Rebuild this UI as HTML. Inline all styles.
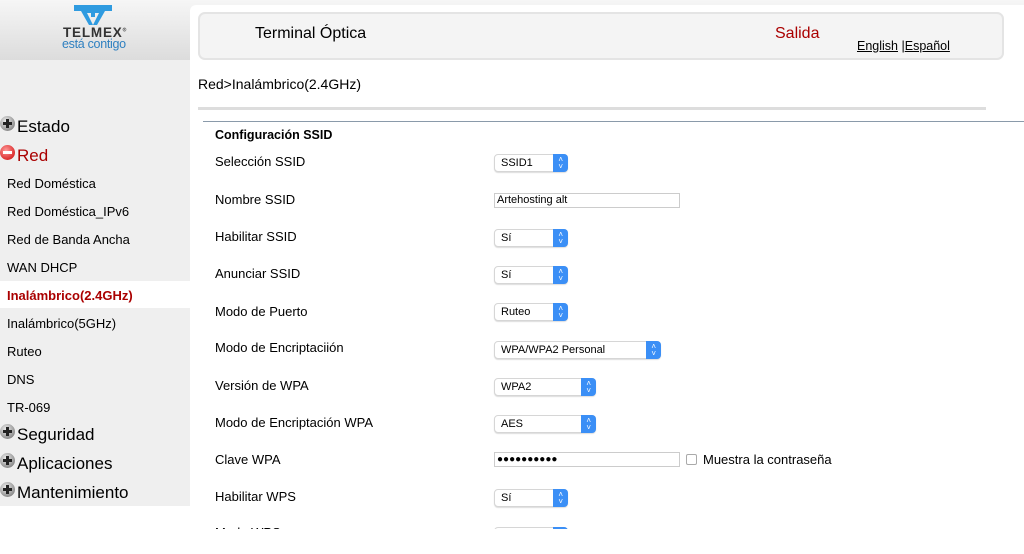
<!DOCTYPE html>
<html><head><meta charset="utf-8"><style>
*{margin:0;padding:0;box-sizing:border-box}
body{width:1024px;height:554px;overflow:hidden;background:#fff;font-family:"Liberation Sans",Arial,sans-serif;position:relative;color:#000}
.abs{position:absolute}
#top{left:0;top:0;width:1024px;height:60px;background:linear-gradient(#f6f6f6,#dcdcdc)}
#side{left:0;top:60px;width:192px;height:446px;background:#efefef}
#panel{left:190px;top:5px;width:834px;height:530px;background:#fff;border-radius:6px 0 0 0}
#hdr{left:198px;top:12px;width:806px;height:48px;background:#f4f4f4;border:2px solid #e4e4e4;border-radius:7px}
.m{font-size:17px;left:17px}
.ic{position:absolute;left:0;width:15px;height:15px;border-radius:50%;background:radial-gradient(circle at 40% 35%,#eee,#666);}
.ic.r{background:radial-gradient(circle at 40% 35%,#f99,#c00)}
.ic b{position:absolute;left:3px;top:6px;width:9px;height:3px;background:#222}
.ic i{position:absolute;left:6px;top:3px;width:3px;height:9px;background:#222}
.ic.r b{background:#fff}
.s{font-size:13px;left:7px}
.l{font-size:13px;left:215px}
.sel{position:absolute;left:494px;height:18px;border:1px solid #d6d6d6;border-radius:4px;background:#fff;font-size:11px;padding:2px 0 0 6px;box-shadow:0 1px 1px #ddd}
.sel:after{content:"";position:absolute;right:-1px;top:-1px;width:15px;height:18px;background:#3b8ff6;border-radius:0 4px 4px 0}
.sel span{position:absolute;right:4px;top:1px;color:#fff;font-size:8px;line-height:7px;z-index:2}
.inp{position:absolute;left:494px;width:186px;height:15px;border:1px solid #ccc;font-size:11px;padding:0 2px;line-height:13px}
</style></head><body>
<div id="top" class="abs"></div>
<div id="side" class="abs"></div>
<div id="panel" class="abs"></div>
<div id="hdr" class="abs"></div>
<svg class="abs" style="left:74px;top:5px" width="38" height="21" viewBox="0 0 38 21"><polygon points="0,0 38,0 38,6 31,6 23,20 19,20 25,8 21,8 21,12 17,12 17,8 13,8 19,20 15,20 7,6 0,6" fill="#2f9be0"/></svg>
<div class="abs" style="left:63px;top:25px;font-size:13.5px;font-weight:bold;color:#333;letter-spacing:0.8px">TELMEX<sup style="font-size:5px">®</sup></div>
<div class="abs" style="left:62px;top:37px;font-size:12.5px;color:#2f80c0;letter-spacing:-0.3px">está contigo</div>
<div class="abs" style="left:255px;top:25px;font-size:16px">Terminal Óptica</div>
<div class="abs" style="left:775px;top:25px;font-size:16px;color:#a00">Salida</div>
<div class="abs" style="left:857px;top:39px;font-size:12.5px"><u>English</u> |<u>Español</u></div>
<div class="abs" style="left:198px;top:76px;font-size:14px">Red&gt;Inalámbrico(2.4GHz)</div>
<div class="abs" style="left:198px;top:107px;width:788px;height:3px;background:#ddd"></div>
<div class="abs" style="left:203px;top:121px;width:821px;height:1px;background:#8a9aaa"></div>
<div class="abs" style="left:215px;top:128px;font-size:12.5px;font-weight:bold">Configuración SSID</div>

<div class="abs" style="left:0;top:116px;width:192px;height:20px"><div class="ic"><b></b><i></i></div><div class="abs m" style="top:1px">Estado</div></div>
<div class="abs" style="left:0;top:145px;width:192px;height:20px"><div class="ic r"><b></b></div><div class="abs m" style="top:1px;color:#a00">Red</div></div>
<div class="abs s" style="top:176px">Red Doméstica</div>
<div class="abs s" style="top:204px">Red Doméstica_IPv6</div>
<div class="abs s" style="top:232px">Red de Banda Ancha</div>
<div class="abs s" style="top:260px">WAN DHCP</div>
<div class="abs" style="left:0;top:281px;width:192px;height:27px;background:#fff"></div>
<div class="abs s" style="top:288px;color:#a00;font-weight:bold">Inalámbrico(2.4GHz)</div>
<div class="abs s" style="top:316px">Inalámbrico(5GHz)</div>
<div class="abs s" style="top:344px">Ruteo</div>
<div class="abs s" style="top:372px">DNS</div>
<div class="abs s" style="top:400px">TR-069</div>
<div class="abs" style="left:0;top:424px;width:192px;height:20px"><div class="ic"><b></b><i></i></div><div class="abs m" style="top:1px">Seguridad</div></div>
<div class="abs" style="left:0;top:453px;width:192px;height:20px"><div class="ic"><b></b><i></i></div><div class="abs m" style="top:1px">Aplicaciones</div></div>
<div class="abs" style="left:0;top:482px;width:192px;height:20px"><div class="ic"><b></b><i></i></div><div class="abs m" style="top:1px">Mantenimiento</div></div>

<div class="abs l" style="top:154px">Selección SSID</div>
<div class="sel" style="top:154px;width:74px">SSID1<span>˄<br>˅</span></div>
<div class="abs l" style="top:192px">Nombre SSID</div>
<div class="inp" style="top:193px">Artehosting alt</div>
<div class="abs l" style="top:229px">Habilitar SSID</div>
<div class="sel" style="top:229px;width:74px">Sí<span>˄<br>˅</span></div>
<div class="abs l" style="top:266px">Anunciar SSID</div>
<div class="sel" style="top:266px;width:74px">Sí<span>˄<br>˅</span></div>
<div class="abs l" style="top:304px">Modo de Puerto</div>
<div class="sel" style="top:303px;width:74px">Ruteo<span>˄<br>˅</span></div>
<div class="abs l" style="top:340px">Modo de Encriptaciión</div>
<div class="sel" style="top:341px;width:167px">WPA/WPA2 Personal<span>˄<br>˅</span></div>
<div class="abs l" style="top:378px">Versión de WPA</div>
<div class="sel" style="top:378px;width:102px">WPA2<span>˄<br>˅</span></div>
<div class="abs l" style="top:415px">Modo de Encriptación WPA</div>
<div class="sel" style="top:415px;width:102px">AES<span>˄<br>˅</span></div>
<div class="abs l" style="top:452px">Clave WPA</div>
<div class="inp" style="top:452px;font-size:10px">●●●●●●●●●●</div>
<div class="abs" style="left:686px;top:454px;width:11px;height:11px;border:1px solid #aaa;border-radius:2px"></div>
<div class="abs" style="left:703px;top:452px;font-size:13px">Muestra la contraseña</div>
<div class="abs l" style="top:489px">Habilitar WPS</div>
<div class="sel" style="top:489px;width:74px">Sí<span>˄<br>˅</span></div>
<div class="abs l" style="top:525px">Modo WPS</div>
<div class="sel" style="top:527px;width:74px"><span></span></div>
<div class="abs" style="left:192px;top:529px;width:832px;height:25px;background:#fff"></div>
</body></html>
